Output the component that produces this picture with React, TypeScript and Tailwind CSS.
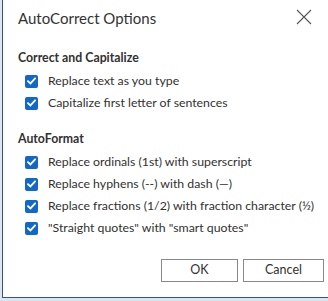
import React from "react";

const FONT = { fontFamily: '"Segoe UI", Lato, "Open Sans", sans-serif' };

function Check({ label }: { label: string }) {
  return (
    <label className="flex h-[22px] items-center gap-[10px] whitespace-nowrap pl-[7px] text-[12.3px] text-[#323130]">
      <span className="flex h-[13px] w-[13px] shrink-0 items-center justify-center rounded-[2px] bg-[#1168c8]">
        <svg width="9" height="8" viewBox="0 0 9 8" fill="none">
          <path d="M1 4.2 L3.4 6.4 L8 1.4" stroke="white" strokeWidth="1.8" strokeLinecap="square" />
        </svg>
      </span>
      <span>{label}</span>
    </label>
  );
}

export default function App() {
  return (
    <div className="h-[301px] w-[328px] overflow-hidden bg-[#dfe4ec]" style={FONT}>
      <div className="ml-[2px] h-[298px] w-[326px] border-b border-l border-[#2b579a] bg-white">
        <div className="flex h-[34px] items-center justify-between pl-[15px] pr-[15px] pt-[2px]">
          <h1 className="text-[15px] text-[#333]">AutoCorrect Options</h1>
          <svg width="16" height="16" viewBox="0 0 16 16" className="mb-[3px] mr-[1px]">
            <path d="M1 1 L15 15 M15 1 L1 15" stroke="#555" strokeWidth="1.1" />
          </svg>
        </div>

        <div className="pl-[15px] pt-[15px]">
          <div className="text-[12.3px] font-bold leading-[18px] text-[#323130]">Correct and Capitalize</div>
          <div className="pt-[3px]">
            <Check label="Replace text as you type" />
            <Check label="Capitalize first letter of sentences" />
          </div>

          <div className="pt-[16px] text-[12.3px] font-bold leading-[18px] text-[#323130]">AutoFormat</div>
          <div className="pt-[3px]">
            <Check label="Replace ordinals (1st) with superscript" />
            <Check label="Replace hyphens (--) with dash (—)" />
            <Check label="Replace fractions (1/2) with fraction character (½)" />
            <Check label={'"Straight quotes" with "smart quotes"'} />
          </div>
        </div>

        <div className="flex justify-end gap-[5px] pr-[4px] pt-[20px]">
          <button className="h-[23px] w-[77px] border border-[#8a8886] bg-white text-[12.5px] text-[#323130]">OK</button>
          <button className="h-[23px] w-[81px] border border-[#8a8886] bg-white text-[12.5px] text-[#323130]">Cancel</button>
        </div>
      </div>
    </div>
  );
}
